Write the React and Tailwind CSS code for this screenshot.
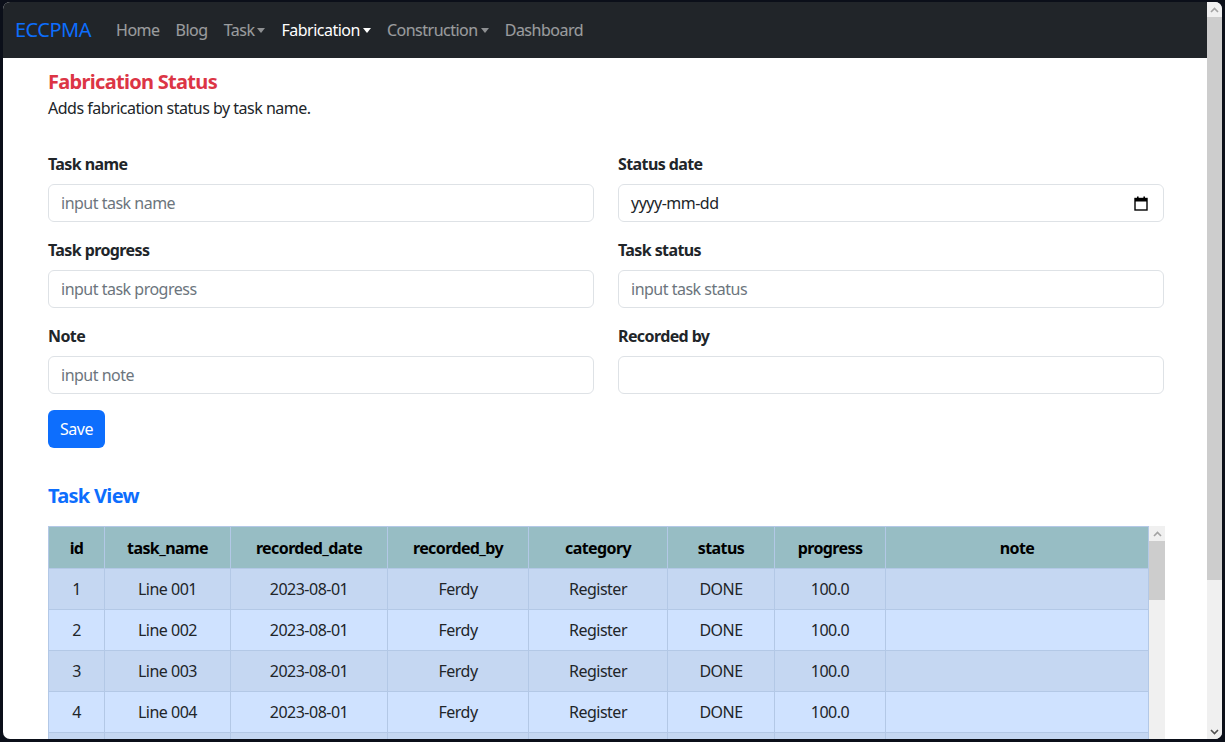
import React from "react";

const rows = [1, 2, 3, 4, 5].map((i) => ({
  id: i,
  task: `Line 00${i}`,
  date: "2023-08-01",
  by: "Ferdy",
  cat: "Register",
  status: "DONE",
  progress: "100.0",
  note: "",
}));

const cols = [
  ["id", 56],
  ["task_name", 126],
  ["recorded_date", 157],
  ["recorded_by", 141],
  ["category", 139],
  ["status", 107],
  ["progress", 111],
  ["note", 263],
];

function Caret({ light }) {
  return (
    <span
      className={`ml-[3px] inline-block h-0 w-0 border-x-[4px] border-t-[5px] border-x-transparent align-[3px] ${
        light ? "border-t-white" : "border-t-[#8e9092]"
      }`}
    />
  );
}

function Field({ label, placeholder, type }) {
  return (
    <div className="flex flex-col">
      <label className="mb-[8px] h-[24px] text-[16px] font-bold leading-[24px] tracking-[-0.6px] text-[#212529]">{label}</label>
      {type === "date" ? (
        <div className="flex h-[38px] items-center justify-between rounded-[6px] border border-[#dee2e6] bg-white pl-[12px] pr-[15px]">
          <span className="text-[16px] text-[#212529]">yyyy-mm-dd</span>
          <svg width="14" height="15" viewBox="0 0 14 15">
            <rect x="1" y="2.5" width="12" height="11.5" fill="none" stroke="#000" strokeWidth="1.4" />
            <rect x="1" y="2.5" width="12" height="3" fill="#000" />
            <rect x="3" y="0.5" width="1.6" height="3" fill="#000" />
            <rect x="9.4" y="0.5" width="1.6" height="3" fill="#000" />
          </svg>
        </div>
      ) : (
        <div className="flex h-[38px] items-center rounded-[6px] border border-[#dee2e6] bg-white px-[12px]">
          <span className="text-[16px] text-[#6c757d]">{placeholder}</span>
        </div>
      )}
    </div>
  );
}

function Chevron({ up, color }) {
  return (
    <svg width="9" height="6" viewBox="0 0 9 6">
      <path
        d={up ? "M1 5 L4.5 1.5 L8 5" : "M1 1 L4.5 4.5 L8 1"}
        fill="none"
        stroke={color}
        strokeWidth="1.6"
      />
    </svg>
  );
}

export default function App() {
  return (
    <div className="h-[742px] w-[1225px] overflow-hidden bg-[#0b0f19] pb-[3px] pl-[3px] pr-[3px] pt-[2px] font-['Noto_Sans',sans-serif] tracking-[-0.5px]">
      <div className="flex h-full w-full overflow-hidden rounded-[7px] bg-white">
        {/* page */}
        <div className="flex min-w-0 flex-1 flex-col overflow-hidden">
          {/* navbar */}
          <nav className="flex h-[56px] shrink-0 items-center bg-[#212529] pl-[12px]">
            <span className="mr-[17px] text-[20px] leading-[30px] text-[#0d6efd]">ECCPMA</span>
            <div className="flex items-center text-[16px] leading-[24px] text-white/55">
              <span className="px-[8px]">Home</span>
              <span className="px-[8px]">Blog</span>
              <span className="px-[8px]">
                Task
                <Caret />
              </span>
              <span className="px-[8px] text-white">
                Fabrication
                <Caret light />
              </span>
              <span className="px-[8px]">
                Construction
                <Caret />
              </span>
              <span className="px-[8px]">Dashboard</span>
            </div>
          </nav>

          {/* content */}
          <div className="ml-[45px] w-[1116px] pt-[12px]">
            <h5 className="text-[20px] font-bold leading-[24px] tracking-[-0.7px] text-[#dc3545]">Fabrication Status</h5>
            <p className="mt-[2px] text-[16px] leading-[24px] text-[#212529]">Adds fabrication status by task name.</p>

            <div className="mt-[32px] grid grid-cols-2 gap-x-[24px] gap-y-[16px]">
              <Field label="Task name" placeholder="input task name" />
              <Field label="Status date" type="date" />
              <Field label="Task progress" placeholder="input task progress" />
              <Field label="Task status" placeholder="input task status" />
              <Field label="Note" placeholder="input note" />
              <Field label="Recorded by" placeholder="" />
            </div>

            <button className="mt-[16px] h-[38px] rounded-[6px] bg-[#0d6efd] px-[12px] text-[16px] leading-[24px] text-white">
              Save
            </button>

            <h5 className="mt-[36px] text-[20px] font-bold leading-[24px] tracking-[-0.7px] text-[#0d6efd]">Task View</h5>

            <div className="mt-[18px] flex h-[300px] items-start">
              <table className="w-[1100px] table-fixed border-collapse text-center text-[16px] leading-[24px] text-[#212529]">
                <colgroup>
                  {cols.map(([n, w]) => (
                    <col key={n} style={{ width: w }} />
                  ))}
                </colgroup>
                <thead>
                  <tr className="h-[42px] bg-[#97bdc4]">
                    {cols.map(([n]) => (
                      <th key={n} className="border border-[#b3c8e6] font-bold tracking-[-0.6px] text-black">
                        {n}
                      </th>
                    ))}
                  </tr>
                </thead>
                <tbody>
                  {rows.map((r, i) => (
                    <tr key={r.id} className={`h-[41px] ${i % 2 === 0 ? "bg-[#c5d7f2]" : "bg-[#cfe2ff]"}`}>
                      <td className="border border-[#b3c8e6]">{r.id}</td>
                      <td className="border border-[#b3c8e6]">{r.task}</td>
                      <td className="border border-[#b3c8e6]">{r.date}</td>
                      <td className="border border-[#b3c8e6]">{r.by}</td>
                      <td className="border border-[#b3c8e6]">{r.cat}</td>
                      <td className="border border-[#b3c8e6]">{r.status}</td>
                      <td className="border border-[#b3c8e6]">{r.progress}</td>
                      <td className="border border-[#b3c8e6]">{r.note}</td>
                    </tr>
                  ))}
                </tbody>
              </table>
              {/* inner scrollbar */}
              <div className="flex w-[16px] shrink-0 flex-col self-stretch bg-[#f0f0f0]">
                <div className="flex h-[15px] items-center justify-center">
                  <Chevron up color="#a3a3a3" />
                </div>
                <div className="h-[59px] bg-[#cdcdcd]" />
              </div>
            </div>
          </div>
        </div>

        {/* page scrollbar */}
        <div className="flex w-[15px] shrink-0 flex-col bg-[#f0f0f0]">
          <div className="flex h-[15px] items-center justify-center">
            <Chevron up color="#a3a3a3" />
          </div>
          <div className="h-[563px] bg-[#cdcdcd]" />
          <div className="flex-1" />
          <div className="flex h-[15px] items-center justify-center">
            <Chevron color="#505050" />
          </div>
        </div>
      </div>
    </div>
  );
}
